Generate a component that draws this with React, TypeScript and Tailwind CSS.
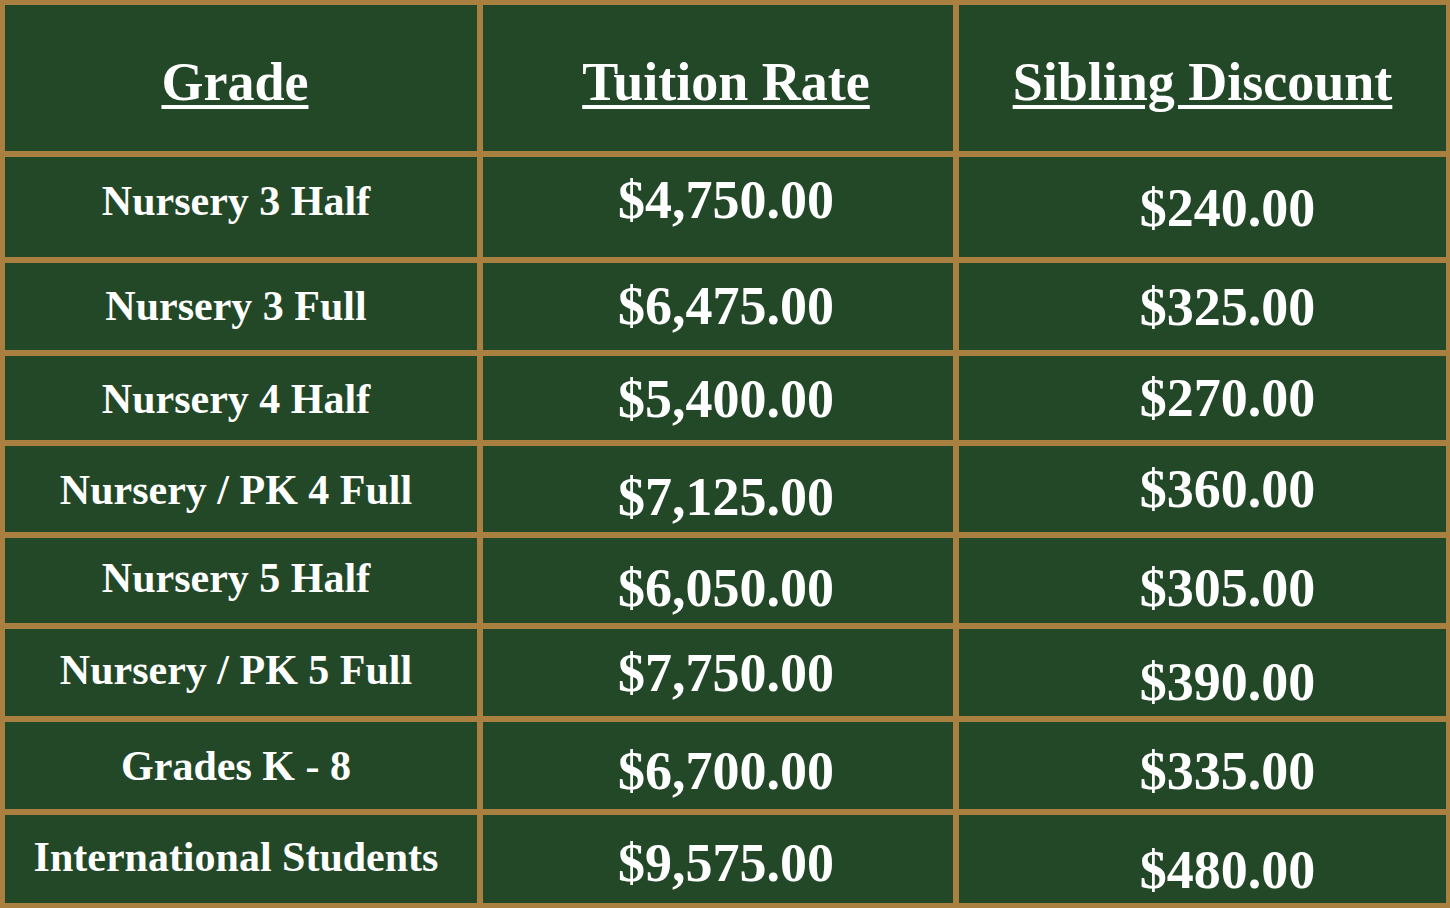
import React from 'react'

type Row = {
  grade: string
  rate: string
  discount: string
  // small nudges so each value sits where it does in the source table
  gradeShift: string
  rateShift: string
  discountShift: string
}

const rows: Row[] = [
  { grade: 'Nursery 3 Half', rate: '$4,750.00', discount: '$240.00', gradeShift: 'pb-[12px]', rateShift: 'pb-[14px]', discountShift: 'pt-[2px]' },
  { grade: 'Nursery 3 Full', rate: '$6,475.00', discount: '$325.00', gradeShift: 'pb-[2px]', rateShift: 'pb-[2px]', discountShift: '' },
  { grade: 'Nursery 4 Half', rate: '$5,400.00', discount: '$270.00', gradeShift: 'pt-[2px]', rateShift: 'pt-[2px]', discountShift: '' },
  { grade: 'Nursery / PK 4 Full', rate: '$7,125.00', discount: '$360.00', gradeShift: 'pt-[2px]', rateShift: 'pt-[16px]', discountShift: '' },
  { grade: 'Nursery 5 Half', rate: '$6,050.00', discount: '$305.00', gradeShift: 'pb-[6px]', rateShift: 'pt-[14px]', discountShift: 'pt-[14px]' },
  { grade: 'Nursery / PK 5 Full', rate: '$7,750.00', discount: '$390.00', gradeShift: 'pb-[6px]', rateShift: '', discountShift: 'pt-[18px]' },
  { grade: 'Grades K - 8', rate: '$6,700.00', discount: '$335.00', gradeShift: '', rateShift: 'pt-[10px]', discountShift: 'pt-[10px]' },
  { grade: 'International Students', rate: '$9,575.00', discount: '$480.00', gradeShift: 'pb-[4px]', rateShift: 'pt-[8px]', discountShift: 'pt-[22px]' },
]

const cell = 'flex items-center justify-center bg-[#234828] text-white'
const head = 'text-[54px] leading-none underline decoration-[4px] underline-offset-[5px]'

export default function App() {
  return (
    <div className="w-[1450px] h-[908px] bg-[#a9803f] pt-[5px] pl-[5px] pr-[4px] pb-[5px] font-['Liberation_Serif',serif] font-bold">
      <div className="grid h-full grid-cols-[472px_470px_487px] grid-rows-[146px_100px_87px_84px_86px_85px_87px_87px_88px] gap-[6px]">
        <div className={`${cell} pr-[12px] pt-[7px]`}>
          <span className={head}>Grade</span>
        </div>
        <div className={`${cell} pl-[16px] pt-[7px]`}>
          <span className={head}>Tuition Rate</span>
        </div>
        <div className={`${cell} pt-[7px]`}>
          <span className={head}>Sibling Discount</span>
        </div>

        {rows.map((r) => (
          <React.Fragment key={r.grade}>
            <div className={`${cell} pr-[10px] ${r.gradeShift}`}>
              <span className="text-[42px] leading-none">{r.grade}</span>
            </div>
            <div className={`${cell} pl-[16px] ${r.rateShift}`}>
              <span className="text-[54px] leading-none">{r.rate}</span>
            </div>
            <div className={`${cell} pl-[50px] ${r.discountShift}`}>
              <span className="text-[54px] leading-none">{r.discount}</span>
            </div>
          </React.Fragment>
        ))}
      </div>
    </div>
  )
}
